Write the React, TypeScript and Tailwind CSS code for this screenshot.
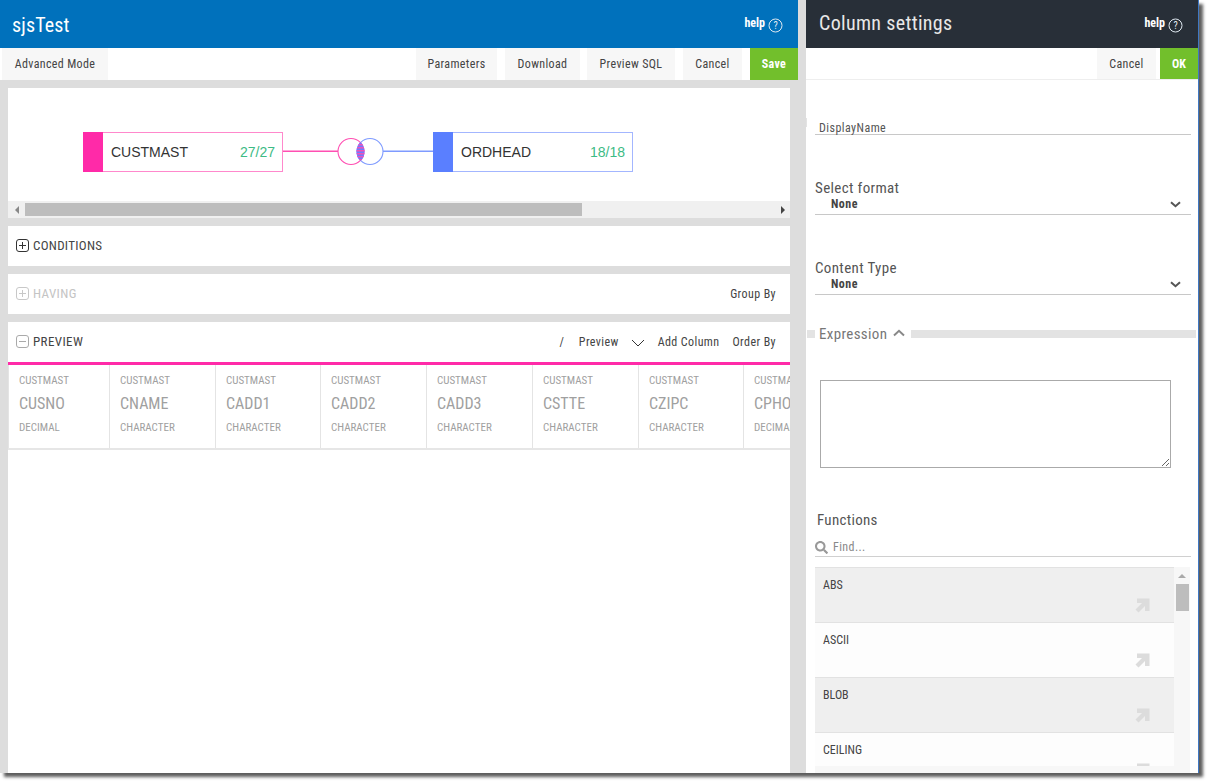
import React from "react";
import { FaSearch } from "react-icons/fa";

const Help = ({ className = "" }: { className?: string }) => (
  <div className={`flex items-center gap-[3px] text-white ${className}`}>
    <span className="text-[12px] font-bold leading-none relative top-[-1px]">help</span>
    <svg width="15" height="15" viewBox="0 0 15 15" fill="none" className="relative top-[1px]">
      <circle cx="7.5" cy="7.5" r="6.5" stroke="#dfe8f0" strokeWidth="1" />
      <text x="7.5" y="11" textAnchor="middle" fontSize="10" fill="#e8eef4" fontFamily="Roboto, sans-serif">?</text>
    </svg>
  </div>
);

const Btn = ({ w, children, className = "" }: { w: string; children: React.ReactNode; className?: string }) => (
  <div className={`h-8 flex items-center justify-center bg-[#f7f7f7] text-[12px] tracking-[0.35px] text-[#444] ${w} ${className}`}>{children}</div>
);

const PlusMinus = ({ minus, color }: { minus?: boolean; color: string }) => (
  <svg width="13" height="13" viewBox="0 0 13 13" fill="none" className="shrink-0 relative top-[-1px]">
    <rect x="0.5" y="0.5" width="12" height="12" rx="2.5" stroke={color} />
    <path d={minus ? "M3 6.5H10" : "M3 6.5H10M6.5 3V10"} stroke={color} />
  </svg>
);

const Node = ({ name, count, fill, border }: { name: string; count: string; fill: string; border: string }) => (
  <div className={`w-[200px] h-10 flex border ${border}`}>
    <div className={`w-5 -my-px -ml-px mr-0 ${fill}`} />
    <div className="flex-1 flex items-center justify-between pl-2 pr-[7px] font-['Liberation_Sans',sans-serif] text-[14px] [font-stretch:100%]">
      <span className="text-[#333]">{name}</span>
      <span className="text-[#3dbb85]">{count}</span>
    </div>
  </div>
);

const Join = () => (
  <svg width="150" height="40" viewBox="0 0 150 40" fill="none" className="shrink-0">
    <defs>
      <clipPath id="lensA"><circle cx="68" cy="19.5" r="13.5" /></clipPath>
      <clipPath id="lensB"><circle cx="87" cy="19.5" r="13.5" /></clipPath>
    </defs>
    <path d="M0 19.2H55" stroke="#ff4fb2" strokeWidth="1.5" />
    <path d="M100 19.2H150" stroke="#7f9bff" strokeWidth="1.5" />
    <circle cx="68" cy="19.5" r="13" stroke="#ff4fb2" strokeWidth="1.1" />
    <circle cx="87" cy="19.5" r="13" stroke="#7f9bff" strokeWidth="1.1" />
    <g clipPath="url(#lensA)">
      <g clipPath="url(#lensB)">
        <rect x="70" y="4" width="16" height="32" fill="#6f7bff" />
        {[9, 12, 15, 18, 21, 24, 27, 30].map((y) => (
          <rect key={y} x="70" y={y} width="16" height="1.5" fill="#f050b8" />
        ))}
      </g>
    </g>
  </svg>
);

const cols = [
  { w: "w-[102px]", n: "CUSNO", t: "DECIMAL" },
  { w: "w-[106px]", n: "CNAME", t: "CHARACTER" },
  { w: "w-[105px]", n: "CADD1", t: "CHARACTER" },
  { w: "w-[106px]", n: "CADD2", t: "CHARACTER" },
  { w: "w-[106px]", n: "CADD3", t: "CHARACTER" },
  { w: "w-[106px]", n: "CSTTE", t: "CHARACTER" },
  { w: "w-[105px]", n: "CZIPC", t: "CHARACTER" },
  { w: "w-[106px]", n: "CPHONE", t: "DECIMAL" },
];

const Chevron = () => (
  <svg width="11" height="7" viewBox="0 0 11 7" fill="none">
    <path d="M1 1.2L5.5 5.2L10 1.2" stroke="#555" strokeWidth="2" />
  </svg>
);

const Select = ({ label, top }: { label: string; top: string }) => (
  <div className={`ml-[9px] mr-[7px] ${top} border-b border-[#c8c8c8] h-[35px] shrink-0`}>
    <div className="text-[15px] leading-[17px] tracking-[0.35px] text-[#555]">{label}</div>
    <div className="flex justify-between items-start pl-4 pr-[10px] h-[15px]">
      <span className="text-[12px] font-bold tracking-[0.5px] text-[#444] leading-[14px]">None</span>
      <span className="relative top-[4px]"><Chevron /></span>
    </div>
  </div>
);

const FnRow = ({ name, shaded }: { name: string; shaded?: boolean }) => (
  <div className={`h-[55px] shrink-0 flex flex-col border-t border-[#e2e2e2] pl-2 pr-[24px] ${shaded ? "bg-[#efefef]" : "bg-[#fdfdfd]"}`}>
    <div className="text-[12px] text-[#444] leading-[14px] mt-[10px]">{name}</div>
    <div className="flex justify-end mt-[6px]">
      <svg width="15" height="15" viewBox="0 0 15 15"><path d="M2 0.5H14.5V13H10V8L3.5 14.5L0.5 11.5L7 5H2Z" fill="#dcdcdc" /></svg>
    </div>
  </div>
);

export default function App() {
  return (
    <div className="w-[1208px] h-[782px] bg-white overflow-hidden font-['Roboto',sans-serif] [font-stretch:85%]">
      <div className="w-[1199px] h-[773px] flex bg-[#dddddd] border-r border-[#3f78c4] shadow-[4px_4px_3px_rgba(40,40,40,0.75)]">
        {/* Left pane */}
        <div className="w-[798px] h-full flex flex-col shrink-0">
          <div className="h-12 bg-[#0071bc] flex items-center justify-between pl-3 pr-[15px] shrink-0">
            <span className="text-[20px] tracking-[0.15px] text-white relative top-px">sjsTest</span>
            <Help />
          </div>
          <div className="h-8 bg-white flex shrink-0 pl-[2px]">
            <Btn w="w-[106px]" className="tracking-[0.5px]">Advanced Mode</Btn>
            <div className="flex-1" />
            <Btn w="w-[81px]">Parameters</Btn>
            <Btn w="w-[75px]" className="ml-2">Download</Btn>
            <Btn w="w-[88px]" className="ml-[7px]">Preview SQL</Btn>
            <Btn w="w-[59px]" className="ml-2">Cancel</Btn>
            <div className="w-12 ml-2 bg-[#72bf2c] text-white text-[12px] tracking-[0.3px] font-bold flex items-center justify-center">Save</div>
          </div>
          <div className="flex-1 min-h-0 flex flex-col gap-2 px-2 pt-2">
            {/* Diagram */}
            <div className="h-[130px] bg-white flex flex-col shrink-0">
              <div className="flex-1 flex pl-[75px] pt-[44px]">
                <Node name="CUSTMAST" count="27/27" fill="bg-[#ff2aa8]" border="border-[#ff88cc]" />
                <Join />
                <Node name="ORDHEAD" count="18/18" fill="bg-[#5a7fff]" border="border-[#a3b6ff]" />
              </div>
              <div className="h-[17px] bg-[#f0f0f0] flex items-center">
                <div className="w-[17px] flex justify-center">
                  <div className="w-0 h-0 border-y-[4px] border-y-transparent border-r-[4px] border-r-[#888]" />
                </div>
                <div className="w-[557px] h-[13px] bg-[#bdbdbd]" />
                <div className="flex-1 flex justify-end pr-[5px]">
                  <div className="w-0 h-0 border-y-[4px] border-y-transparent border-l-[4px] border-l-[#444]" />
                </div>
              </div>
            </div>
            {/* Conditions */}
            <div className="h-10 bg-white flex items-center pl-2 gap-[3px] shrink-0 relative">
              <PlusMinus color="#333" />
              <span className="text-[13px] tracking-[0.3px] text-[#444] ml-[1px]">CONDITIONS</span>
            </div>
            {/* Having */}
            <div className="h-10 bg-white flex items-center pl-2 pr-[14px] gap-[3px] shrink-0">
              <PlusMinus color="#c8c8c8" />
              <span className="text-[13px] tracking-[0.4px] text-[#c4c4c4] flex-1 ml-[1px]">HAVING</span>
              <span className="text-[12px] tracking-[0.4px] text-[#444]">Group By</span>
            </div>
            {/* Preview */}
            <div className="flex-1 min-h-0 bg-white flex flex-col overflow-hidden">
              <div className="h-10 flex items-center pl-2 pr-[14px] gap-[3px] shrink-0">
                <PlusMinus minus color="#aaa" />
                <span className="text-[13px] tracking-[0.4px] text-[#444] flex-1 ml-[1px]">PREVIEW</span>
                <span className="text-[12px] text-[#444] mr-[12px]">/</span>
                <span className="text-[12px] tracking-[0.4px] text-[#444] mr-[9px]">Preview</span>
                <svg width="14" height="8" viewBox="0 0 14 8" fill="none" className="mr-[10px] relative top-[1px]"><path d="M1 1L7 7L13 1" stroke="#333" /></svg>
                <span className="text-[12px] tracking-[0.4px] text-[#444] mr-[10px]">Add Column</span>
                <span className="text-[12px] tracking-[0.4px] text-[#444]">Order By</span>
              </div>
              <div className="flex h-[88px] border-t-[3px] border-[#ff2aa8] border-b-2 border-b-[#e6e6e6] shrink-0 overflow-hidden">
                {cols.map((c, i) => (
                  <div key={c.n} className={`${c.w} shrink-0 border-r border-[#e4e4e4] pl-[10px] ${i === 0 ? "border-l" : ""}`}>
                    <div className="text-[11px] text-[#a0a0a0] leading-[12px] mt-[10px]">CUSTMAST</div>
                    <div className="text-[16px] text-[#a0a0a0] leading-[18px] mt-[8px]">{c.n}</div>
                    <div className="text-[11px] text-[#a0a0a0] leading-[12px] mt-[9px]">{c.t}</div>
                  </div>
                ))}
              </div>
            </div>
          </div>
        </div>
        {/* Right pane */}
        <div className="w-[392px] ml-2 h-full bg-white flex flex-col shrink-0 overflow-hidden">
          <div className="h-12 bg-[#282f38] flex items-center justify-between pl-[13px] pr-[15px] shrink-0">
            <span className="text-[20px] tracking-[0.33px] text-[#e8e8e8] relative top-[-1px]">Column settings</span>
            <Help />
          </div>
          <div className="h-8 flex justify-end border-b border-[#eeeeee] shrink-0">
            <Btn w="w-[59px]" className="h-[31px]">Cancel</Btn>
            <div className="w-[38px] ml-[4px] h-[31px] bg-[#72bf2c] text-white text-[12px] font-bold flex items-center justify-center">OK</div>
          </div>
          <div className="ml-[9px] mr-[7px] mt-[40px] h-[15px] border-b border-[#c8c8c8] pl-1 text-[12px] tracking-[0.45px] leading-[17px] text-[#555] shrink-0 relative">
            DisplayName
            <div className="absolute left-[-9px] top-[-2px] w-px h-[9px] bg-[#e3e3e3]" />
          </div>
          <Select label="Select format" top="mt-[45px]" />
          <Select label="Content Type" top="mt-[45px]" />
          <div className="flex items-center mt-[27px] h-[24px] shrink-0 pl-px pr-[2px]">
            <div className="w-2 h-2 bg-[#e3e3e3]" />
            <span className="text-[15px] tracking-[0.35px] text-[#777] ml-1">Expression</span>
            <svg width="12" height="8" viewBox="0 0 12 8" fill="none" className="ml-[6px] mr-[6px] relative top-[-1px]"><path d="M1 6.5L6 1.8L11 6.5" stroke="#888" strokeWidth="2" /></svg>
            <div className="flex-1 h-2 bg-[#e3e3e3]" />
          </div>
          <textarea className="ml-[14px] mt-[34px] w-[351px] h-[88px] border border-[#aaaaaa] bg-white outline-none shrink-0 block" readOnly />
          <div className="ml-[11px] mt-[44px] text-[15px] tracking-[0.3px] text-[#555] leading-[17px] shrink-0">Functions</div>
          <div className="ml-[9px] mr-[7px] mt-[10px] h-[18px] flex items-center gap-[5px] border-b border-[#d0d0d0] shrink-0 pb-[1px]">
            <FaSearch size={13} color="#999" />
            <span className="text-[12px] tracking-[0.4px] text-[#888]">Find...</span>
          </div>
          <div className="ml-[9px] mr-[8px] mt-[10px] flex-1 min-h-0 flex overflow-hidden relative">
            <div className="flex-1 flex flex-col">
              <FnRow name="ABS" shaded />
              <FnRow name="ASCII" />
              <FnRow name="BLOB" shaded />
              <FnRow name="CEILING" />
            </div>
            <div className="w-[16px] bg-[#f7f7f7] flex flex-col items-center shrink-0 pt-[7px]">
              <div className="w-0 h-0 border-x-[4px] border-x-transparent border-b-[4px] border-b-[#aaa]" />
              <div className="w-[13px] h-[27px] bg-[#bdbdbd] mt-[6px]" />
            </div>
            <div className="absolute left-0 right-0 bottom-0 h-[7px] bg-[#f7f7f7]" />
          </div>
        </div>
      </div>
    </div>
  );
}
